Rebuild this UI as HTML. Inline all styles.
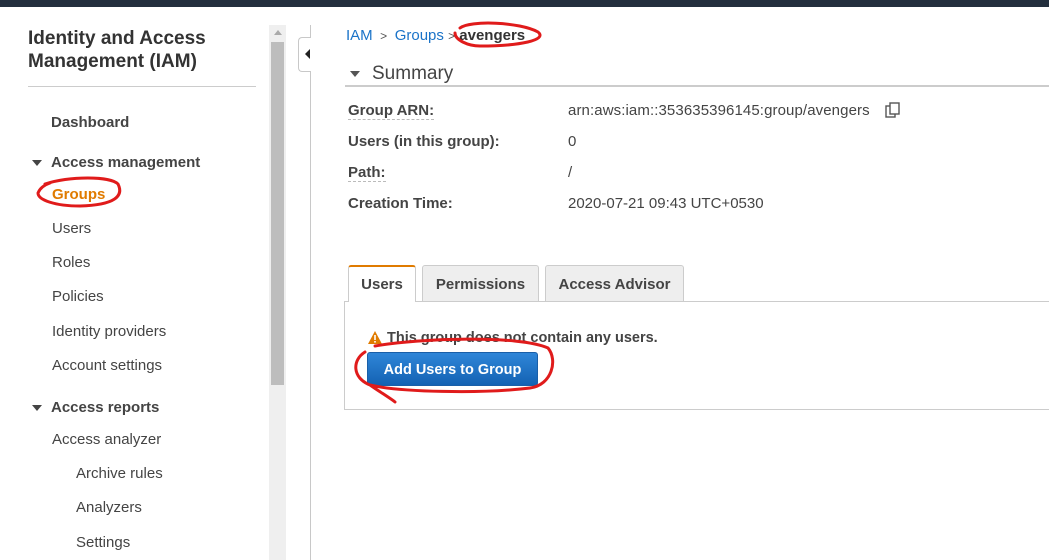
<!DOCTYPE html>
<html><head><meta charset="utf-8"><style>
*{margin:0;padding:0;box-sizing:border-box}
body{width:1049px;height:560px;overflow:hidden;background:#fff;font-family:"Liberation Sans",Arial,sans-serif;color:#444;position:relative}
.a{position:absolute;white-space:nowrap}
.nav{font-size:15px;color:#444}
.b{font-weight:bold}
.tri{display:inline-block;width:0;height:0;border-left:5px solid transparent;border-right:5px solid transparent;border-top:6px solid #444;vertical-align:middle;margin-right:9px}
.lbl{font-size:15px;font-weight:bold;color:#444}
.val{font-size:15px;color:#444}
.tab{position:absolute;top:265px;height:36px;border:1px solid #ccc;border-bottom:none;background:#eee;font-size:15px;font-weight:bold;color:#444;text-align:center;line-height:38px;border-radius:3px 3px 0 0}
</style></head><body>
<div class="a" style="left:0;top:0;width:1049px;height:7px;background:#232f3e"></div>
<div class="a" style="left:28px;top:27px;font-size:19px;font-weight:bold;color:#333;line-height:23px">Identity and Access<br>Management (IAM)</div>
<div class="a" style="left:28px;top:86px;width:228px;height:1px;background:#ccc"></div>
<div class="a nav b" style="left:51px;top:114px">Dashboard</div>
<div class="a nav b" style="left:32px;top:154px"><span class="tri"></span>Access management</div>
<div class="a nav b" style="left:52px;top:186px;color:#e07b00">Groups</div>
<div class="a nav" style="left:52px;top:220px">Users</div>
<div class="a nav" style="left:52px;top:254px">Roles</div>
<div class="a nav" style="left:52px;top:288px">Policies</div>
<div class="a nav" style="left:52px;top:323px">Identity providers</div>
<div class="a nav" style="left:52px;top:357px">Account settings</div>
<div class="a nav b" style="left:32px;top:399px"><span class="tri"></span>Access reports</div>
<div class="a nav" style="left:52px;top:431px">Access analyzer</div>
<div class="a nav" style="left:76px;top:465px">Archive rules</div>
<div class="a nav" style="left:76px;top:499px">Analyzers</div>
<div class="a nav" style="left:76px;top:534px">Settings</div>
<div class="a" style="left:269px;top:25px;width:17px;height:535px;background:#efefef"></div>
<div class="a" style="left:274px;top:30px;width:0;height:0;border-left:4px solid transparent;border-right:4px solid transparent;border-bottom:5px solid #aaa"></div>
<div class="a" style="left:271px;top:42px;width:13px;height:343px;background:#bdbdbd"></div>
<div class="a" style="left:310px;top:25px;width:1px;height:535px;background:#c8c8c8"></div>
<div class="a" style="left:298px;top:37px;width:13px;height:35px;background:#fff;border:1px solid #c8c8c8;border-right:none;border-radius:4px 0 0 4px"></div>
<div class="a" style="left:305px;top:49px;width:0;height:0;border-top:5px solid transparent;border-bottom:5px solid transparent;border-right:5px solid #222"></div>
<div class="a" style="left:346px;top:27px;font-size:15px"><span style="color:#1a73c8">IAM</span> <span style="font-size:12px;color:#555">&nbsp;&gt;&nbsp;</span> <span style="color:#1a73c8">Groups</span> <span style="font-size:12px;color:#555">&gt;</span> <span class="b" style="color:#333">avengers</span></div>
<div class="a" style="left:350px;top:63px;font-size:19px;color:#444"><span class="tri" style="border-top-color:#555;margin-right:12px"></span>Summary</div>
<div class="a" style="left:345px;top:85px;width:704px;height:2px;background:#ccc"></div>
<div class="a lbl" style="left:348px;top:102px;border-bottom:1px dashed #bbb">Group ARN:</div>
<div class="a val" style="left:568px;top:102px;letter-spacing:0.1px">arn:aws:iam::353635396145:group/avengers</div>
<svg class="a" style="left:884px;top:102px" width="18" height="18" viewBox="0 0 18 18"><rect x="2" y="4" width="9" height="11" fill="#fff" stroke="#555" stroke-width="1.4"/><rect x="6" y="1" width="9" height="11" fill="#fff" stroke="#555" stroke-width="1.4"/></svg>
<div class="a lbl" style="left:348px;top:133px">Users (in this group):</div>
<div class="a val" style="left:568px;top:133px">0</div>
<div class="a lbl" style="left:348px;top:164px;border-bottom:1px dashed #bbb">Path:</div>
<div class="a val" style="left:568px;top:164px">/</div>
<div class="a lbl" style="left:348px;top:195px">Creation Time:</div>
<div class="a val" style="left:568px;top:195px">2020-07-21 09:43 UTC+0530</div>
<div class="a" style="left:344px;top:301px;width:710px;height:109px;border:1px solid #ccc"></div>
<div class="tab" style="left:348px;width:68px;height:37px;background:#fff;border-top:2px solid #e07b00;line-height:35px">Users</div>
<div class="tab" style="left:422px;width:117px">Permissions</div>
<div class="tab" style="left:545px;width:139px">Access Advisor</div>
<svg class="a" style="left:367px;top:330px" width="16" height="15" viewBox="0 0 16 15"><path d="M8 1 L15 14 L1 14 Z" fill="#e07b00"/><rect x="7.2" y="5" width="1.6" height="5" fill="#fff"/><rect x="7.2" y="11" width="1.6" height="1.6" fill="#fff"/></svg>
<div class="a" style="left:387px;top:330px;font-size:14.5px;font-weight:bold;color:#444">This group does not contain any users.</div>
<div class="a" style="left:367px;top:352px;width:171px;height:34px;border-radius:3px;background:linear-gradient(#2f86d8,#1462b3);border:1px solid #1a5fa8;color:#fff;font-size:14.5px;font-weight:bold;text-align:center;line-height:34px">Add Users to Group</div>
<svg class="a" style="left:0;top:0" width="1049" height="560">
<g fill="none" stroke="#e01b1b" stroke-width="3" stroke-linecap="round">
<path d="M460 28 C470 20 520 22 538 32 C548 40 520 46 480 46 C468 46 455 40 455 33"/>
<path d="M45 184 C70 176 110 176 118 184 C124 196 115 205 80 206 C55 206 38 200 38 193 C40 188 44 185 50 183"/>
<path d="M375 346 C420 338 520 335 548 348 C558 360 552 385 530 388 C480 394 400 392 370 385 C352 378 352 360 365 352 M370 385 C380 392 390 398 395 402"/>
</g></svg>
</body></html>
